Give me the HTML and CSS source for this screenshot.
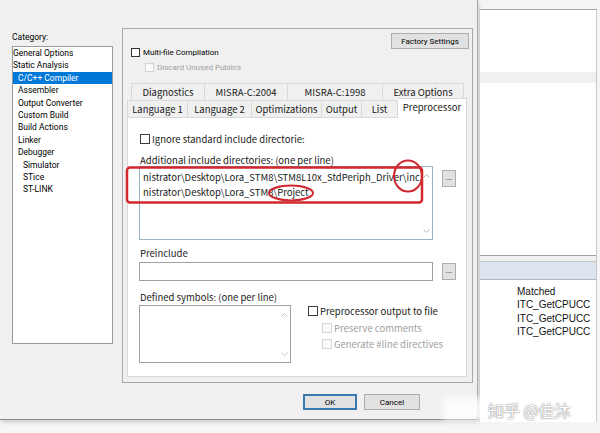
FILE: index.html
```html
<!DOCTYPE html>
<html lang="en">
<head>
  <meta charset="UTF-8">
  <meta name="viewport" content="width=device-width, initial-scale=1.0">
  <title>Options for node</title>
  <link rel="stylesheet" href="styles.css">
</head>
<body>
  <div class="screen">
    <!-- Options dialog -->
    <div class="dialog">
      <div class="dialog-body">
        <!-- Category list -->
        <div class="category">
          <div class="category-label">Category:</div>
          <ul class="category-list">
            <li>General Options</li>
            <li>Static Analysis</li>
            <li class="lvl1 selected">C/C++ Compiler</li>
            <li class="lvl1">Assembler</li>
            <li class="lvl1">Output Converter</li>
            <li class="lvl1">Custom Build</li>
            <li class="lvl1">Build Actions</li>
            <li class="lvl1">Linker</li>
            <li class="lvl1">Debugger</li>
            <li class="lvl2">Simulator</li>
            <li class="lvl2">STice</li>
            <li class="lvl2">ST-LINK</li>
          </ul>
        </div>

        <!-- Options panel -->
        <div class="options">
          <div class="options-top">
            <div class="options-checks">
              <div class="check"><span class="box"></span>Multi-file Compilation</div>
              <div class="check indent disabled"><span class="box"></span>Discard Unused Publics</div>
            </div>
            <button class="btn factory">Factory Settings</button>
          </div>

          <div class="tabs">
            <div class="tab-row back">
              <div class="tab first t-diag">Diagnostics</div>
              <div class="tab t-m2004">MISRA-C:2004</div>
              <div class="tab t-m1998">MISRA-C:1998</div>
              <div class="tab t-extra">Extra Options</div>
            </div>
            <div class="tab-row front">
              <div class="tab first t-lang1">Language 1</div>
              <div class="tab t-lang2">Language 2</div>
              <div class="tab t-opt">Optimizations</div>
              <div class="tab t-out">Output</div>
              <div class="tab t-list">List</div>
              <div class="tab t-pre active">Preprocessor</div>
            </div>

            <div class="tab-page">
              <div class="check big"><span class="box"></span>Ignore standard include directorie:</div>

              <div class="field-label include-label">Additional include directories: (one per line)</div>
              <div class="field-row">
                <div class="textbox include">
                  <div class="lines">
                    <div>nistrator\Desktop\Lora_STM8\STM8L10x_StdPeriph_Driver\inc</div>
                    <div>nistrator\Desktop\Lora_STM8\Project</div>
                  </div>
                  <div class="scroll">
                    <svg width="7" height="4" viewBox="0 0 7 4"><path d="M0.5 3.5 L3.5 0.5 L6.5 3.5" fill="none" stroke="#b8b8b8"/></svg>
                    <svg width="7" height="4" viewBox="0 0 7 4"><path d="M0.5 0.5 L3.5 3.5 L6.5 0.5" fill="none" stroke="#b8b8b8"/></svg>
                  </div>
                </div>
                <button class="btn dots">...</button>
              </div>

              <div class="field-label pre-label">Preinclude</div>
              <div class="field-row">
                <div class="textbox single"></div>
                <button class="btn dots dots-single">...</button>
              </div>

              <div class="defines">
                <div class="defines-left">
                  <div class="field-label">Defined symbols: (one per line)</div>
                  <div class="textbox defs">
                    <div class="lines"></div>
                    <div class="scroll">
                      <svg width="7" height="4" viewBox="0 0 7 4"><path d="M0.5 3.5 L3.5 0.5 L6.5 3.5" fill="none" stroke="#c4c4c4"/></svg>
                      <svg width="7" height="4" viewBox="0 0 7 4"><path d="M0.5 0.5 L3.5 3.5 L6.5 0.5" fill="none" stroke="#c4c4c4"/></svg>
                    </div>
                  </div>
                </div>
                <div class="pp-opts">
                  <div class="check big"><span class="box"></span>Preprocessor output to file</div>
                  <div class="check big indent disabled"><span class="box"></span>Preserve comments</div>
                  <div class="check big indent disabled"><span class="box"></span>Generate #line directives</div>
                </div>
              </div>
            </div>
          </div>
        </div>
      </div>

      <div class="dialog-footer">
        <button class="btn ok">OK</button>
        <button class="btn cancel">Cancel</button>
      </div>
    </div>

    <!-- Window behind the dialog -->
    <div class="side">
      <div class="side-top"></div>
      <div class="side-band"></div>
      <div class="side-mid"></div>
      <div class="side-split"></div>
      <div class="side-header"></div>
      <div class="side-list">
        <div>Matched</div>
        <div>ITC_GetCPUCC</div>
        <div>ITC_GetCPUCC</div>
        <div>ITC_GetCPUCC</div>
      </div>
    </div>

    <!-- Red hand-drawn marks -->
    <svg class="marks" width="600" height="433" viewBox="0 0 600 433">
      <rect x="127" y="167.5" width="295" height="35" rx="3" fill="none" stroke="#d0282e" stroke-width="2.5"/>
      <ellipse cx="408" cy="176" rx="14" ry="15.5" fill="none" stroke="#d0282e" stroke-width="2"/>
      <ellipse cx="291" cy="193" rx="22" ry="7.5" fill="none" stroke="#d0282e" stroke-width="2"/>
    </svg>

    <div class="wm-glow"></div>
    <div class="watermark">知乎 @佳沐</div>
  </div>
</body>
</html>
```

FILE: styles.css
```css
* {
  margin: 0;
  padding: 0;
  box-sizing: border-box;
}

body {
  width: 600px;
  height: 433px;
  overflow: hidden;
  background: #f5f5f5;
  font-family: Roboto, "Noto Sans", sans-serif;
  font-size: 8px;
  color: #000;
}

.screen {
  position: relative;
  display: flex;
  width: 600px;
  height: 433px;
}

/* Dialog */
.dialog {
  width: 478px;
  height: 420px;
  flex: none;
  background: #f0f0f0;
  border-right: 1px solid #a8a8a8;
  border-bottom: 1px solid #8c8c8c;
  box-shadow: 1px 2px 4px rgba(0, 0, 0, 0.18);
  padding: 28px 4px 0 12px;
  display: flex;
  flex-direction: column;
}

.dialog-body {
  display: flex;
  gap: 9px;
}

/* Category */
.category {
  width: 101px;
}

.category-label {
  height: 18px;
  display: flex;
  align-items: center;
  font-size: 8.5px;
}

.category-list {
  list-style: none;
  height: 298px;
  background: #fff;
  border: 1px solid #9a9a9a;
}

.category-list li {
  height: 12.4px;
  line-height: 12.4px;
  font-size: 8.5px;
  white-space: nowrap;
}

.category-list .lvl1 { padding-left: 5px; }
.category-list .lvl2 { padding-left: 10px; }

.category-list .selected {
  background: #0078d7;
  color: #fff;
}

/* Options panel */
.options {
  width: 351px;
  height: 355px;
  border: 1px solid #a9a9a9;
  padding: 4px 3px 0 4px;
}

.options-top {
  display: flex;
  justify-content: space-between;
  align-items: flex-start;
}

.options-checks {
  padding: 12px 0 0 4px;
}

.check {
  display: flex;
  align-items: center;
  height: 15px;
  white-space: nowrap;
}

.box {
  width: 9px;
  height: 9px;
  border: 1px solid #333;
  background: #fff;
  margin-right: 3px;
  flex: none;
}

.check.indent { padding-left: 14px; }
.check.disabled { color: #a0a0a0; }
.check.disabled .box { border-color: #d2d2d2; background: #fafafa; }

.btn {
  font-family: Roboto, "Noto Sans", sans-serif;
  font-size: 8px;
  background: #e1e1e1;
  border: 1px solid #adadad;
  color: #000;
  display: flex;
  align-items: center;
  justify-content: center;
}

.factory {
  width: 78px;
  height: 16px;
}

/* Tabs */
.tabs {
  margin-top: 8px;
  margin-right: 2px;
  font-family: "Noto Sans CJK SC", sans-serif;
  font-size: 9.5px;
  color: #1a1a1a;
}

.tab-row {
  display: flex;
  height: 17px;
}

.tab-row.back { padding-left: 4px; }

.tab {
  display: flex;
  align-items: center;
  justify-content: center;
  background: #f0f0f0;
  border-top: 1px solid #d9d9d9;
  border-right: 1px solid #d9d9d9;
  white-space: nowrap;
}

.tab.first { border-left: 1px solid #d9d9d9; }

.t-diag { width: 74px; }
.t-m2004 { width: 83px; }
.t-m1998 { width: 95px; }
.t-extra { width: 81px; }
.t-lang1 { width: 61px; }
.t-lang2 { width: 64px; }
.t-opt { width: 70px; }
.t-out { width: 40px; }
.t-list { width: 36px; }
.t-pre { width: 69px; }

.tab.active {
  position: relative;
  z-index: 1;
  height: 20px;
  margin-top: -2px;
  background: #fff;
  align-items: flex-start;
  padding-top: 1px;
}

.tab-page {
  height: 260px;
  background: #fff;
  border: 1px solid #d9d9d9;
  padding: 14px 0 0 11px;
}

.check.big { height: 14px; margin-left: 1px; }
.check.big .box {
  width: 10px;
  height: 10px;
  border-color: #3c3c3c;
  margin-right: 2px;
}
.check.big.disabled .box { border-color: #d6d6d6; }

.field-label {
  height: 12px;
  line-height: 12px;
  margin-left: 1px;
  white-space: nowrap;
}

.include-label { margin-top: 8px; }
.pre-label { margin-top: 7px; margin-bottom: 3px; }

.field-row {
  display: flex;
  align-items: flex-start;
}

.textbox {
  background: #fff;
  border: 1px solid #a0a0a0;
  display: flex;
}

.include {
  width: 294px;
  height: 74px;
  border-color: #96b6c0;
}

.lines {
  flex: 1;
  padding: 3px 0 0 3px;
  line-height: 15px;
  white-space: nowrap;
  overflow: hidden;
}

.scroll {
  width: 12px;
  display: flex;
  flex-direction: column;
  justify-content: space-between;
  align-items: center;
  padding: 7px 0 6px;
}

.dots {
  width: 14px;
  height: 17px;
  margin-left: 9px;
  margin-top: 4px;
  font-size: 8px;
  padding-bottom: 3px;
}

.dots-single { margin-top: 1px; }

.single {
  width: 294px;
  height: 19px;
}

.defines {
  display: flex;
  margin-top: 10px;
}

.defs {
  width: 152px;
  height: 58px;
  margin-top: 2px;
}

.pp-opts {
  margin-left: 16px;
  padding-top: 12px;
}

.pp-opts .check { height: 16.5px; }

/* Footer */
.dialog-footer {
  display: flex;
  justify-content: flex-end;
  gap: 7px;
  margin-top: 11px;
  padding-right: 53px;
}

.ok, .cancel { height: 16px; }
.ok { width: 54px; border: 2px solid #3b79ad; }
.cancel { width: 56px; }

/* Window on the right */
.side {
  flex: 1;
  margin: 9px 3px 11px 1px;
  background: #fff;
  border-top: 1px solid #a5a5a5;
  border-left: 1px solid #d0d0d0;
  border-right: 1px solid #c8c8c8;
  display: flex;
  flex-direction: column;
}

.side-top { height: 62px; }
.side-band { height: 11px; background: #f0f0f0; }
.side-mid { height: 172px; }

.side-split {
  height: 7px;
  background: #f0f0f0;
  border-top: 1px solid #a0a0a0;
  border-bottom: 1px solid #c4c4c4;
}

.side-header {
  height: 18px;
  background: #dce5ef;
  border-bottom: 1px solid #a9b8c8;
}

.side-list {
  flex: 1;
  padding: 5px 0 0 37px;
  font-family: "Liberation Sans", Arial, sans-serif;
  font-size: 10px;
  line-height: 13.3px;
  color: #111;
}

/* Overlays */
.marks {
  position: absolute;
  top: 0;
  left: 0;
  pointer-events: none;
}

.wm-glow {
  position: absolute;
  left: 443px;
  top: 398px;
  width: 40px;
  height: 22px;
  background: rgba(255, 255, 255, 0.85);
  filter: blur(3px);
}

.watermark {
  position: absolute;
  left: 488px;
  top: 399px;
  font-family: "Noto Sans CJK SC", sans-serif;
  font-size: 16px;
  line-height: 22px;
  color: #fff;
  text-shadow: 0 0 1px #777, 0 0 2px #999;
  white-space: nowrap;
}
```
